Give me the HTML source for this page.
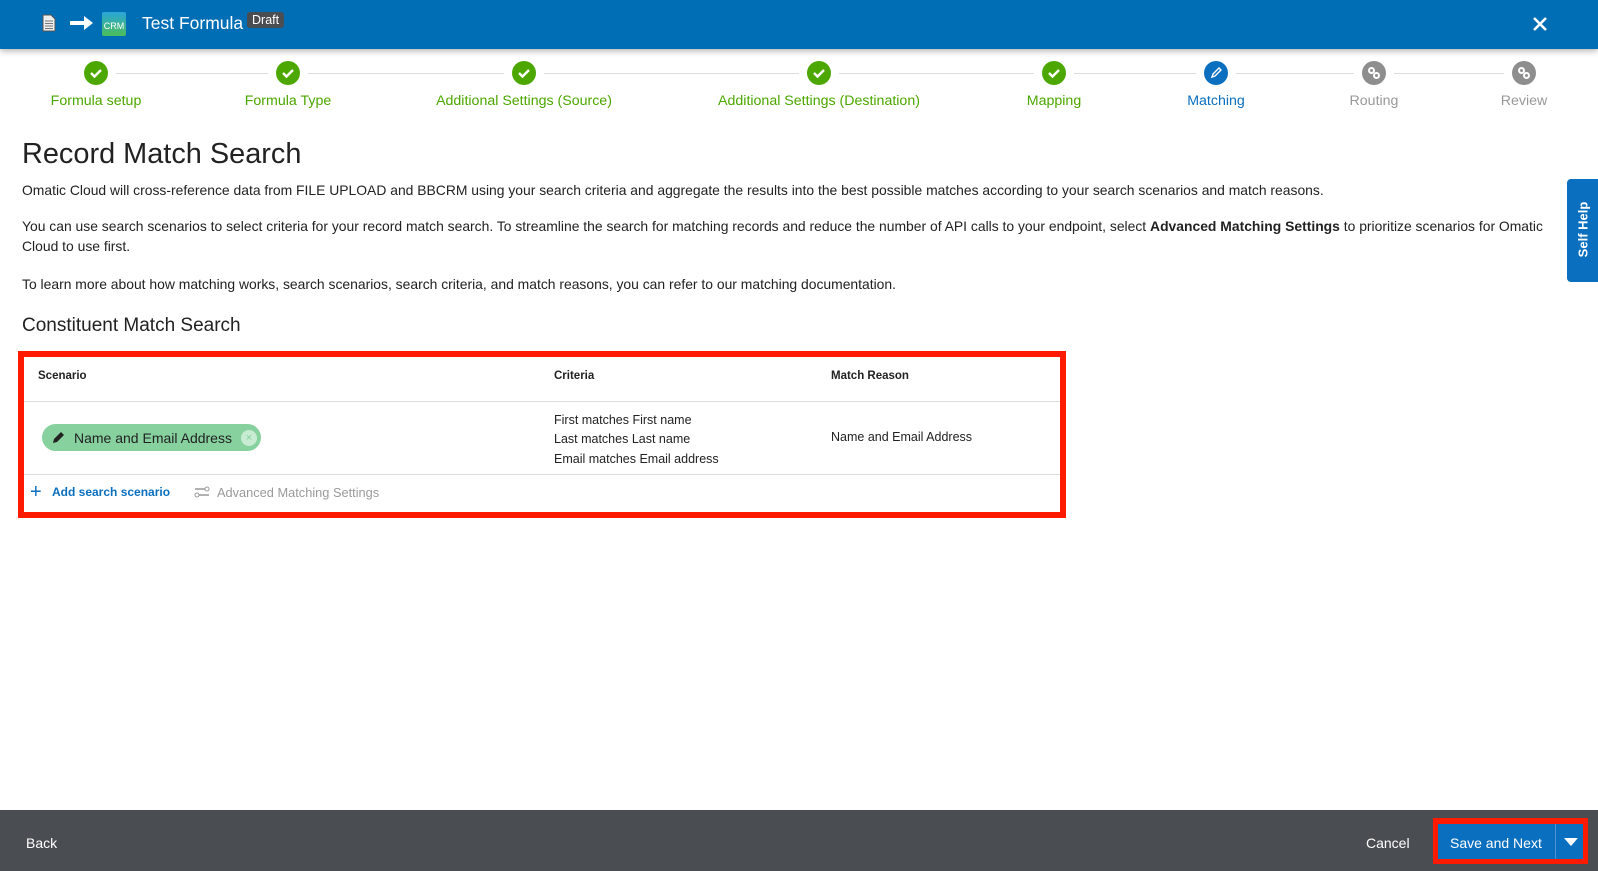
<!DOCTYPE html>
<html><head><meta charset="utf-8"><style>
*{box-sizing:border-box;margin:0;padding:0}
body{width:1598px;height:871px;position:relative;overflow:hidden;background:#fff;font-family:"Liberation Sans",Arial,sans-serif;color:#222}
.hdr{position:absolute;left:0;top:0;width:1598px;height:49px;background:#006eb5;box-shadow:0 2px 6px rgba(0,0,0,.3)}
.abs{position:absolute}
.step{position:absolute;top:61px;width:0}
.step .c{position:absolute;left:-12px;top:0;width:24px;height:24px;border-radius:50%;display:flex;align-items:center;justify-content:center}
.step .l{position:absolute;top:32px;left:-150px;width:300px;text-align:center;font-size:14.2px}
.line{position:absolute;top:73px;height:1px;background:#ddd}
p.t{position:absolute;left:22px;font-size:13.9px;line-height:20px;color:#222}
.foot{position:absolute;left:0;top:810px;width:1598px;height:61px;background:#4a4d51}
</style></head><body>
<div class="hdr">
 <svg class="abs" style="left:42px;top:14px" width="14" height="18" viewBox="0 0 14 18"><path d="M1 1h8l4 4v12H1z" fill="#eee" stroke="#555"/><path d="M3 7h8M3 9.5h8M3 12h8M3 14.5h8" stroke="#777"/></svg>
 <svg class="abs" style="left:69px;top:15px" width="26" height="16" viewBox="0 0 26 16"><path d="M1 6h14V1l9 7-9 7v-5H1z" fill="#fff"/></svg>
 <div class="abs" style="left:102px;top:12px;width:24px;height:24px;border-radius:2px;background:linear-gradient(#2aa6d8,#4cbd5a);color:#fff;font-size:9px;text-align:center;line-height:28px">CRM</div>
 <div class="abs" style="left:142px;top:13px;color:#fff;font-size:17.5px">Test Formula</div>
 <div class="abs" style="left:247px;top:12px;background:#4a4d51;color:#fff;font-size:12.5px;padding:1px 5px;border-radius:3px">Draft</div>
 <svg class="abs" style="left:1532px;top:16px" width="16" height="16" viewBox="0 0 16 16"><path d="M2 2l12 12M14 2L2 14" stroke="#fff" stroke-width="2.6"/></svg>
</div>
<div class="line" style="left:116px;width:152px"></div>
<div class="line" style="left:308px;width:196px"></div>
<div class="line" style="left:544px;width:255px"></div>
<div class="line" style="left:839px;width:195px"></div>
<div class="line" style="left:1074px;width:122px"></div>
<div class="line" style="left:1236px;width:118px"></div>
<div class="line" style="left:1394px;width:110px"></div>
<div class="step" style="left:96px"><div class="c" style="background:#4ca700"><svg width="14" height="14"><path d="M2 7l3.5 3.5L12 4" stroke="#fff" stroke-width="2.4" fill="none"/></svg></div><div class="l" style="color:#4ca700">Formula setup</div></div>
<div class="step" style="left:288px"><div class="c" style="background:#4ca700"><svg width="14" height="14"><path d="M2 7l3.5 3.5L12 4" stroke="#fff" stroke-width="2.4" fill="none"/></svg></div><div class="l" style="color:#4ca700">Formula Type</div></div>
<div class="step" style="left:524px"><div class="c" style="background:#4ca700"><svg width="14" height="14"><path d="M2 7l3.5 3.5L12 4" stroke="#fff" stroke-width="2.4" fill="none"/></svg></div><div class="l" style="color:#4ca700">Additional Settings (Source)</div></div>
<div class="step" style="left:819px"><div class="c" style="background:#4ca700"><svg width="14" height="14"><path d="M2 7l3.5 3.5L12 4" stroke="#fff" stroke-width="2.4" fill="none"/></svg></div><div class="l" style="color:#4ca700">Additional Settings (Destination)</div></div>
<div class="step" style="left:1054px"><div class="c" style="background:#4ca700"><svg width="14" height="14"><path d="M2 7l3.5 3.5L12 4" stroke="#fff" stroke-width="2.4" fill="none"/></svg></div><div class="l" style="color:#4ca700">Mapping</div></div>
<div class="step" style="left:1216px"><div class="c" style="background:#0a6fbf"><svg width="14" height="14"><path d="M3 11l1-3 6-6 2 2-6 6z M3 11l3-1" stroke="#fff" stroke-width="1.4" fill="none"/></svg></div><div class="l" style="color:#0a6fbf">Matching</div></div>
<div class="step" style="left:1374px"><div class="c" style="background:#8e8e8e"><svg width="16" height="16"><circle cx="5.5" cy="5.5" r="2.5" fill="none" stroke="#fff" stroke-width="2"/><circle cx="10.5" cy="10.5" r="2.5" fill="none" stroke="#fff" stroke-width="2"/></svg></div><div class="l" style="color:#999">Routing</div></div>
<div class="step" style="left:1524px"><div class="c" style="background:#8e8e8e"><svg width="16" height="16"><circle cx="5.5" cy="5.5" r="2.5" fill="none" stroke="#fff" stroke-width="2"/><circle cx="10.5" cy="10.5" r="2.5" fill="none" stroke="#fff" stroke-width="2"/></svg></div><div class="l" style="color:#999">Review</div></div>

<div class="abs" style="left:22px;top:138px;font-size:28.9px;color:#222">Record Match Search</div>
<p class="t" style="top:180px">Omatic Cloud will cross-reference data from FILE UPLOAD and BBCRM using your search criteria and aggregate the results into the best possible matches according to your search scenarios and match reasons.</p>
<p class="t" style="top:216px;width:1530px">You can use search scenarios to select criteria for your record match search. To streamline the search for matching records and reduce the number of API calls to your endpoint, select <b>Advanced Matching Settings</b> to prioritize scenarios for Omatic Cloud to use first.</p>
<p class="t" style="top:274px">To learn more about how matching works, search scenarios, search criteria, and match reasons, you can refer to our matching documentation.</p>
<div class="abs" style="left:22px;top:315px;font-size:19px;color:#222">Constituent Match Search</div>

<div class="abs" style="left:18px;top:351px;width:1048px;height:167px;border:6px solid #ff1a00"></div>
<div class="abs" style="left:24px;top:401px;width:1036px;height:1px;background:#ddd"></div>
<div class="abs" style="left:24px;top:474px;width:1036px;height:1px;background:#ddd"></div>
<div class="abs" style="left:38px;top:370px;font-size:11.5px;font-weight:bold">Scenario</div>
<div class="abs" style="left:554px;top:370px;font-size:11.5px;font-weight:bold">Criteria</div>
<div class="abs" style="left:831px;top:370px;font-size:11.5px;font-weight:bold">Match Reason</div>
<div class="abs" style="left:42px;top:424px;width:219px;height:27px;border-radius:14px;background:#86d19e"></div>
<svg class="abs" style="left:52px;top:430px" width="14" height="14"><path d="M1 13l1-4 7-7 3 3-7 7z" fill="#222"/></svg>
<div class="abs" style="left:74px;top:430px;font-size:14px">Name and Email Address</div>
<div class="abs" style="left:241px;top:430px;width:16px;height:16px;border-radius:50%;background:#c7ecd2;color:#86d19e;font-size:11px;text-align:center;line-height:16px">×</div>
<div class="abs" style="left:554px;top:411px;font-size:12.5px;line-height:19.3px">First matches First name<br>Last matches Last name<br>Email matches Email address</div>
<div class="abs" style="left:831px;top:430px;font-size:12.5px">Name and Email Address</div>
<div class="abs" style="left:30px;top:482px;font-size:20px;color:#0a6fbf;line-height:20px">+</div>
<div class="abs" style="left:52px;top:485px;font-size:12px;font-weight:bold;color:#0a6fbf">Add search scenario</div>
<svg class="abs" style="left:194px;top:486px" width="16" height="12"><path d="M1 3h10M5 9h10" stroke="#999" stroke-width="1.4"/><circle cx="13" cy="3" r="2" fill="none" stroke="#999"/><circle cx="3" cy="9" r="2" fill="none" stroke="#999"/></svg>
<div class="abs" style="left:217px;top:485px;font-size:12.8px;color:#9a9a9a">Advanced Matching Settings</div>

<div class="abs" style="left:1567px;top:179px;width:31px;height:103px;background:#0a6fbf;border-radius:4px 0 0 4px"></div>
<div class="abs" style="left:1539px;top:222px;width:88px;transform:rotate(-90deg);color:#fff;font-weight:bold;font-size:13px;text-align:center">Self Help</div>

<div class="foot"></div>
<div class="abs" style="left:26px;top:835px;color:#fff;font-size:14px">Back</div>
<div class="abs" style="left:1366px;top:835px;color:#fff;font-size:14px">Cancel</div>
<div class="abs" style="left:1433px;top:818px;width:155px;height:46px;background:#ff1a00"></div>
<div class="abs" style="left:1438px;top:824px;width:145px;height:35px;background:#0a6fbf"></div>
<div class="abs" style="left:1555px;top:824px;width:1px;height:35px;background:#4a93d0"></div>
<div class="abs" style="left:1450px;top:835px;color:#fff;font-size:14px">Save and Next</div>
<svg class="abs" style="left:1564px;top:838px" width="14" height="9"><path d="M0 0h14L7 8z" fill="#fff"/></svg>
</body></html>
